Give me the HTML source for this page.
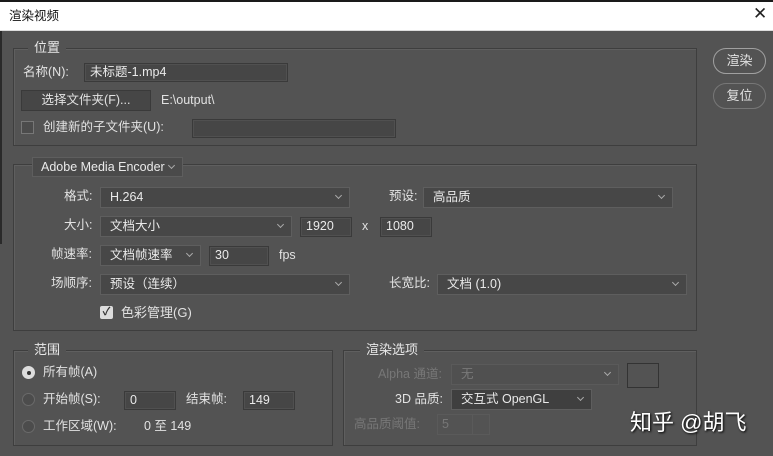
<!DOCTYPE html>
<html><head><meta charset="utf-8"><style>
*{box-sizing:border-box;margin:0;padding:0}
body{width:773px;height:456px;background:#535353;position:relative;overflow:hidden;font-family:"Liberation Sans","Noto Sans CJK SC",sans-serif;font-size:12.5px;color:#e2e2e2;line-height:15px}
.a{position:absolute;white-space:nowrap}
.grp{position:absolute;border:1px solid #3e3e3e;box-shadow:inset 1px 1px 0 #5f5f5f}
.leg{position:absolute;background:#535353;padding:0 6px;font-size:13px;color:#e8e8e8}
.in{position:absolute;background:#464646;border:1px solid #3a3a3a;box-shadow:inset 0 0 0 1px #505050;padding-left:5px;line-height:17px;color:#eaeaea}
.dd{position:absolute;background:#474747;border:1px solid #5e5e5e;padding-left:9px;line-height:18px;color:#eaeaea}
.dd:after{content:"";position:absolute;right:8px;top:5px;width:4px;height:4px;border-right:1px solid #aaa;border-bottom:1px solid #aaa;transform:rotate(45deg)}
.btn{position:absolute;background:#464646;border:1px solid #3a3a3a;text-align:center;line-height:18px}
.pill{position:absolute;border:1px solid #a0a0a0;border-radius:14px;text-align:center;line-height:24px;font-size:13px}
.lab{position:absolute;text-align:right;white-space:nowrap}
.rad{position:absolute;width:13px;height:13px;border-radius:50%;border:1px solid #6a6a6a;background:#4c4c4c}
.dis{color:#777}
</style></head><body>
<div class="a" style="left:0;top:0;width:773px;height:2px;background:#1a1a1a"></div>
<div class="a" style="left:0;top:2px;width:773px;height:29px;background:#fff;border-bottom:1px solid #ddd"></div>
<div class="a" style="left:9px;top:9px;color:#111;font-size:12.5px">渲染视频</div>
<div class="a" style="left:753px;top:6px;color:#222;font-size:17px;font-weight:300">✕</div>
<div class="a" style="left:0;top:31px;width:2px;height:213px;background:#2a2a2a"></div>

<!-- 位置 -->
<div class="grp" style="left:13px;top:48px;width:684px;height:98px"></div>
<div class="leg" style="left:28px;top:40px">位置</div>
<div class="lab" style="left:23px;top:65px">名称(N):</div>
<div class="in" style="left:84px;top:63px;width:204px;height:19px">未标题-1.mp4</div>
<div class="btn" style="left:21px;top:90px;width:130px;height:21px;line-height:19px">选择文件夹(F)...</div>
<div class="a" style="left:161px;top:93px">E:\output\</div>
<div class="a" style="left:21px;top:121px;width:13px;height:13px;border:1px solid #777;background:#4c4c4c"></div>
<div class="a" style="left:43px;top:120px">创建新的子文件夹(U):</div>
<div class="in" style="left:192px;top:119px;width:204px;height:19px"></div>

<!-- encoder -->
<div class="grp" style="left:13px;top:164px;width:684px;height:167px"></div>
<div class="dd" style="left:32px;top:157px;width:151px;height:20px;background:#4a4a4a;padding-left:8px">Adobe Media Encoder</div>
<div class="lab" style="left:64px;top:189px">格式:</div>
<div class="dd" style="left:100px;top:187px;width:250px;height:21px">H.264</div>
<div class="lab" style="left:389px;top:189px">预设:</div>
<div class="dd" style="left:423px;top:187px;width:250px;height:21px">高品质</div>
<div class="lab" style="left:64px;top:218px">大小:</div>
<div class="dd" style="left:100px;top:216px;width:192px;height:21px">文档大小</div>
<div class="in" style="left:300px;top:217px;width:52px;height:20px">1920</div>
<div class="a" style="left:362px;top:219px">x</div>
<div class="in" style="left:380px;top:217px;width:52px;height:20px">1080</div>
<div class="lab" style="left:51px;top:247px">帧速率:</div>
<div class="dd" style="left:100px;top:245px;width:101px;height:21px">文档帧速率</div>
<div class="in" style="left:209px;top:246px;width:60px;height:20px">30</div>
<div class="a" style="left:279px;top:248px">fps</div>
<div class="lab" style="left:51px;top:276px">场顺序:</div>
<div class="dd" style="left:100px;top:274px;width:250px;height:21px">预设（连续）</div>
<div class="lab" style="left:389px;top:276px">长宽比:</div>
<div class="dd" style="left:437px;top:274px;width:250px;height:21px">文档 (1.0)</div>
<div class="a" style="left:100px;top:306px;width:13px;height:13px;background:#ddd;border-radius:2px;color:#333;font-size:11px;line-height:13px;text-align:center;font-weight:bold">✓</div>
<div class="a" style="left:121px;top:305px;font-size:13px">色彩管理(G)</div>

<!-- 范围 -->
<div class="grp" style="left:13px;top:350px;width:320px;height:96px"></div>
<div class="leg" style="left:28px;top:342px">范围</div>
<div class="rad" style="left:22px;top:366px;background:#ddd;border-color:#ddd"></div>
<div class="a" style="left:26.5px;top:370.5px;width:4px;height:4px;border-radius:50%;background:#333"></div>
<div class="a" style="left:43px;top:365px">所有帧(A)</div>
<div class="rad" style="left:22px;top:393px"></div>
<div class="a" style="left:43px;top:392px">开始帧(S):</div>
<div class="in" style="left:124px;top:391px;width:52px;height:19px">0</div>
<div class="a" style="left:186px;top:392px">结束帧:</div>
<div class="in" style="left:243px;top:391px;width:52px;height:19px">149</div>
<div class="rad" style="left:22px;top:420px"></div>
<div class="a" style="left:43px;top:419px">工作区域(W):</div>
<div class="a" style="left:144px;top:419px">0 至 149</div>

<!-- 渲染选项 -->
<div class="grp" style="left:343px;top:350px;width:354px;height:96px"></div>
<div class="leg" style="left:360px;top:342px">渲染选项</div>
<div class="lab dis" style="left:378px;top:367px">Alpha 通道:</div>
<div class="dd" style="left:451px;top:364px;width:168px;height:21px;background:#505050;border-color:#5a5a5a;color:#7a7a7a">无</div>
<div class="a" style="left:627px;top:363px;width:32px;height:25px;border:1px solid #333"></div>
<div class="lab" style="left:395px;top:392px">3D 品质:</div>
<div class="dd" style="left:451px;top:389px;width:141px;height:21px;background:#3f3f3f">交互式 OpenGL</div>
<div class="lab dis" style="left:354px;top:417px">高品质阈值:</div>
<div class="a" style="left:437px;top:414px;width:53px;height:21px;border:1px solid #5a5a5a;color:#777;padding-left:4px;line-height:19px">5</div>
<div class="a" style="left:472px;top:414px;width:1px;height:21px;background:#5a5a5a"></div>

<div class="a" style="left:630px;top:410px;font-size:22px;line-height:26px;color:#fff;text-shadow:1px 1px 2px #000">知乎 @胡飞</div>

<!-- side buttons -->
<div class="pill" style="left:713px;top:48px;width:53px;height:26px">渲染</div>
<div class="pill" style="left:713px;top:83px;width:53px;height:26px;border-color:#777">复位</div>
</body></html>
